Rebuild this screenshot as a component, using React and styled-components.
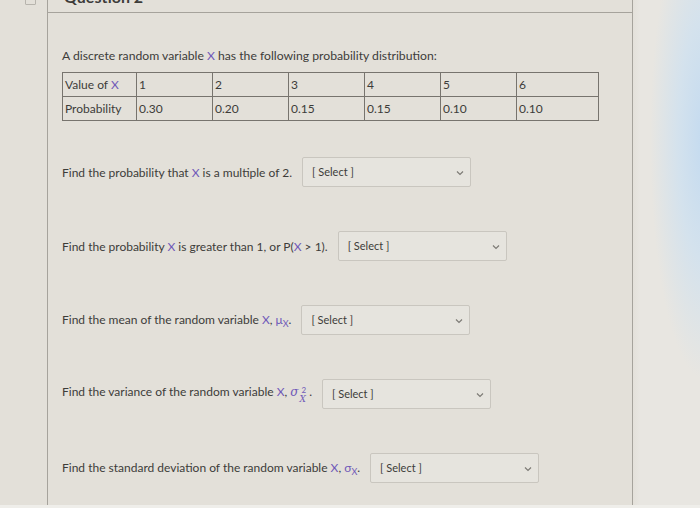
import React from 'react';
import styled, { createGlobalStyle } from 'styled-components';

const colors = {
  page: '#e3e0d9',
  below: '#efeeea',
  text: '#3d3c39',
  accent: '#6f58b8',
  rule: '#a6a39c',
  cell: '#77746e',
  field: '#c9c6bf',
  chevron: '#7d7b76',
};

const GlobalStyle = createGlobalStyle`
  html, body {
    margin: 0;
    padding: 0;
    background: ${colors.below};
  }
  body {
    font-family: Lato, 'Open Sans', 'Noto Sans', sans-serif;
    color: ${colors.text};
    overflow: hidden;
  }
`;

const values = [
  { x: '1', p: '0.30' },
  { x: '2', p: '0.20' },
  { x: '3', p: '0.15' },
  { x: '4', p: '0.15' },
  { x: '5', p: '0.10' },
  { x: '6', p: '0.10' },
];

const Chevron = () => (
  <svg width="8" height="6" viewBox="0 0 8 6">
    <path d="M1 1.5 L4 4.5 L7 1.5" fill="none" stroke={colors.chevron} strokeWidth="1.2" />
  </svg>
);

const Dropdown = () => (
  <Select>
    <SelectLabel>[ Select ]</SelectLabel>
    <Chevron />
  </Select>
);

const App = () => {
  return (
    <Main>
      <GlobalStyle />
      <Gutter>
        <Flag />
      </Gutter>
      <Panel>
        <Header>
          <HeaderTitle>Question 2</HeaderTitle>
        </Header>
        <Content>
          <Intro>
            A discrete random variable <Var>X</Var> has the following probability distribution:
          </Intro>
          <Table>
            <tbody>
              <tr>
                <Cell $first>Value of <Var>X</Var></Cell>
                {values.map((v) => (
                  <Cell key={v.x} $last={v.x === '6'}>{v.x}</Cell>
                ))}
              </tr>
              <tr>
                <Cell $first>Probability</Cell>
                {values.map((v) => (
                  <Cell key={v.x} $last={v.x === '6'}>{v.p}</Cell>
                ))}
              </tr>
            </tbody>
          </Table>

          <Questions>
            <Question>
              <Prompt>Find the probability that <Var>X</Var> is a multiple of 2.</Prompt>
              <Dropdown />
            </Question>
            <Question>
              <Prompt>
                Find the probability <Var>X</Var> is greater than 1, or P(<Var>X</Var> &gt; 1).
              </Prompt>
              <Dropdown />
            </Question>
            <Question>
              <Prompt>
                Find the mean of the random variable <Var>X</Var>, <Var>μ<Sub>X</Sub></Var>.
              </Prompt>
              <Dropdown />
            </Question>
            <Question>
              <Prompt>
                Find the variance of the random variable <Var>X</Var>,{' '}
                <Var>
                  <Sigma>σ</Sigma>
                  <Stack>
                    <Sup>2</Sup>
                    <Lower>X</Lower>
                  </Stack>
                </Var>{' '}
                .
              </Prompt>
              <Dropdown />
            </Question>
            <Question>
              <Prompt>
                Find the standard deviation of the random variable <Var>X</Var>,{' '}
                <Var>σ<Sub>X</Sub></Var>.
              </Prompt>
              <Dropdown />
            </Question>
          </Questions>
        </Content>
      </Panel>
      <Margin />
    </Main>
  );
};

const Main = styled.div`
  display: flex;
  height: 505px;
  background:
    radial-gradient(ellipse 55px 240px at 705px 140px, #c3daf0 0%, #d4e2ed 50%, rgba(227, 224, 217, 0) 100%),
    linear-gradient(90deg, rgba(0, 0, 0, 0) 632px, #e8e6e1 640px),
    ${colors.page};
`;

const Gutter = styled.div`
  width: 47px;
  flex-shrink: 0;
`;

const Flag = styled.div`
  width: 9px;
  height: 9px;
  margin: -6px 0 0 25px;
  border: 1px solid #b7b4ad;
  border-radius: 1px;
`;

const Panel = styled.div`
  width: 584px;
  flex-shrink: 0;
  border-left: 1px solid ${colors.rule};
  border-right: 1px solid ${colors.rule};
  display: flex;
  flex-direction: column;
`;

const Margin = styled.div`
  flex: 1;
`;

const Header = styled.div`
  height: 12px;
  border-bottom: 1px solid ${colors.rule};
  display: flex;
  align-items: flex-end;
  padding-left: 16px;
`;

const HeaderTitle = styled.div`
  font-size: 16px;
  font-weight: 700;
  line-height: 16px;
  margin-bottom: 7px;
`;

const Content = styled.div`
  padding: 35px 0 0 14px;
`;

const Var = styled.span`
  color: ${colors.accent};
`;

const Sub = styled.sub`
  font-size: 9px;
  vertical-align: -3px;
`;

const Sigma = styled.span`
  font-style: italic;
  font-family: 'DejaVu Serif', serif;
  font-size: 12px;
`;

const Stack = styled.span`
  display: inline-block;
  vertical-align: -6px;
  margin-left: 1px;
  line-height: 9px;
`;

const Sup = styled.span`
  display: block;
  font-size: 8px;
  padding-left: 2px;
`;

const Lower = styled.span`
  display: block;
  font-size: 9px;
  font-style: italic;
  font-family: 'DejaVu Serif', serif;
`;

const Intro = styled.p`
  margin: 0 0 9px;
  font-size: 12.2px;
  line-height: 15px;
`;

const Table = styled.table`
  border-collapse: collapse;
  font-size: 12px;
`;

const Cell = styled.td`
  border: 1px solid ${colors.cell};
  border-left: ${(p) => (p.$first ? `1px solid ${colors.cell}` : 'none')};
  padding: 0 2px;
  height: 23px;
  width: ${(p) => (p.$first ? '69px' : p.$last ? '77px' : '71px')};
  line-height: 23px;
  white-space: nowrap;

  &:nth-child(2) {
    border-left: none;
  }
`;

const Questions = styled.div`
  display: flex;
  flex-direction: column;
  gap: 44px;
  margin-top: 36px;
`;

const Question = styled.div`
  display: flex;
  align-items: center;
  gap: 10px;
`;

const Prompt = styled.span`
  font-size: 12px;
  white-space: nowrap;
`;

const Select = styled.div`
  box-sizing: border-box;
  width: 169px;
  height: 30px;
  border: 1px solid ${colors.field};
  border-radius: 2px;
  background: #e6e4de;
  display: flex;
  align-items: center;
  justify-content: space-between;
  padding: 0 6px 0 9px;

  svg {
    margin-top: 2px;
  }
`;

const SelectLabel = styled.span`
  font-size: 11px;
  margin-top: -2px;
`;

export default App;
